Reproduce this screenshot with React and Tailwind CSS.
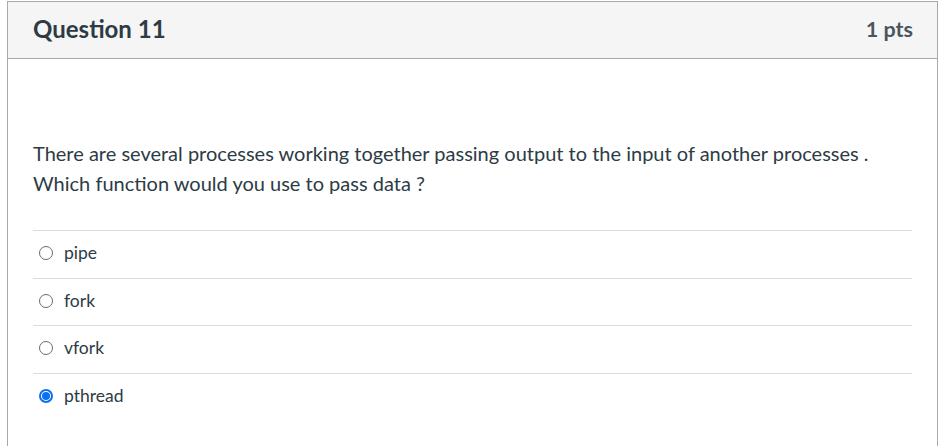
const answers = [
  { id: "a1", label: "pipe", checked: false },
  { id: "a2", label: "fork", checked: false },
  { id: "a3", label: "vfork", checked: false },
  { id: "a4", label: "pthread", checked: true },
];

const Radio = ({ checked }) =>
  checked ? (
    <span className="w-[14px] h-[14px] rounded-full border-2 border-[#0b6ff2] flex items-center justify-center shrink-0">
      <span className="w-[8px] h-[8px] rounded-full bg-[#0b6ff2]" />
    </span>
  ) : (
    <span className="w-[14px] h-[14px] rounded-full border border-[#6b6b6b] shrink-0" />
  );

export default function App() {
  return (
    <div className="w-[940px] h-[446px] bg-white overflow-hidden pl-[7px] pt-[1px] text-[#2d3b45]" style={{ fontFamily: "Lato, 'Liberation Sans', sans-serif" }}>
      <div className="w-[931px] border border-[#a9a9a9] border-b-0 h-[460px]">
        {/* Header */}
        <div className="h-[57px] bg-[#f5f5f5] border-b border-[#a9a9a9] flex items-center justify-between pl-[25px] pr-[24px] pb-[2px]">
          <span className="text-[24px] font-bold">Question 11</span>
          <span className="text-[21.5px] font-bold text-[#4a5560]">1 pts</span>
        </div>

        {/* Body */}
        <div className="px-[25px] pt-[79px]">
          <p className="text-[20px] leading-[30px]">
            There are several processes working together passing output to the input of another processes .
            <br />
            Which function would you use to pass data ?
          </p>

          <div className="mt-[32px]">
            {answers.map((a) => (
              <div key={a.id} className="h-[47.5px] border-t border-[#dcdcdc] flex items-center pl-[6px] pb-[2px] gap-[11px] text-[17.5px]">
                <Radio checked={a.checked} />
                <span>{a.label}</span>
              </div>
            ))}
          </div>
        </div>
      </div>
    </div>
  );
}
